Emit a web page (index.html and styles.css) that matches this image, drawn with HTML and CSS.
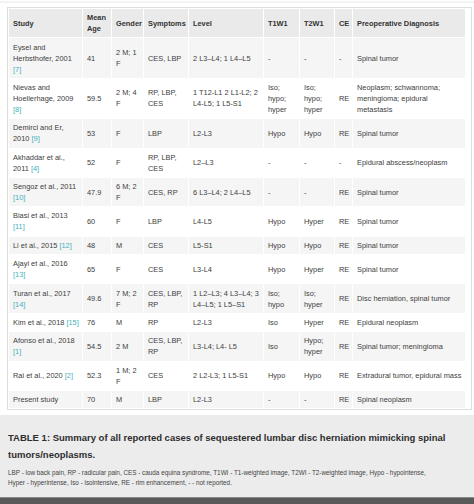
FILE: index.html
```html
<!DOCTYPE html>
<html>
<head>
<meta charset="utf-8">
<link rel="stylesheet" href="styles.css">
</head>
<body>
<div class="page">
  <div class="top-strip"></div>
  <div class="table-box">
    <table class="cases">
      <colgroup>
        <col class="c-study"><col class="c-age"><col class="c-gender"><col class="c-sym"><col class="c-level"><col class="c-t1"><col class="c-t2"><col class="c-ce"><col class="c-dx">
      </colgroup>
      <thead>
        <tr><th>Study</th><th>Mean Age</th><th>Gender</th><th>Symptoms</th><th>Level</th><th>T1W1</th><th>T2W1</th><th>CE</th><th>Preoperative Diagnosis</th></tr>
      </thead>
      <tbody>
        <tr><td>Eysel and Herbsthofer, 2001 <a class="ref">[7]</a></td><td>41</td><td>2 M; 1 F</td><td>CES, LBP</td><td>2 L3–L4; 1 L4–L5</td><td>-</td><td>-</td><td>-</td><td>Spinal tumor</td></tr>
        <tr><td>Nievas and Hoellerhage, 2009 <a class="ref">[8]</a></td><td>59.5</td><td>2 M; 4 F</td><td>RP, LBP, CES</td><td>1 T12-L1 2 L1-L2; 2 L4-L5; 1 L5-S1</td><td>Iso; hypo; hyper</td><td>Iso; hypo; hyper</td><td>RE</td><td>Neoplasm; schwannoma; meningioma; epidural metastasis</td></tr>
        <tr><td>Demirci and Er, 2010 <a class="ref">[9]</a></td><td>53</td><td>F</td><td>LBP</td><td>L2-L3</td><td>Hypo</td><td>Hypo</td><td>RE</td><td>Spinal tumor</td></tr>
        <tr><td>Akhaddar et al., 2011 <a class="ref">[4]</a></td><td>52</td><td>F</td><td>RP, LBP, CES</td><td>L2–L3</td><td>-</td><td>-</td><td>-</td><td>Epidural abscess/neoplasm</td></tr>
        <tr><td>Sengoz et al., 2011 <a class="ref">[10]</a></td><td>47.9</td><td>6 M; 2 F</td><td>CES, RP</td><td>6 L3–L4; 2 L4–L5</td><td>-</td><td>-</td><td>RE</td><td>Spinal tumor</td></tr>
        <tr><td>Biasi et al., 2013 <a class="ref">[11]</a></td><td>60</td><td>F</td><td>LBP</td><td>L4-L5</td><td>Hypo</td><td>Hyper</td><td>RE</td><td>Spinal tumor</td></tr>
        <tr><td>Li et al., 2015 <a class="ref">[12]</a></td><td>48</td><td>M</td><td>CES</td><td>L5-S1</td><td>Hypo</td><td>Hypo</td><td>RE</td><td>Spinal tumor</td></tr>
        <tr><td>Ajayi et al., 2016 <a class="ref">[13]</a></td><td>65</td><td>F</td><td>CES</td><td>L3-L4</td><td>Hypo</td><td>Hyper</td><td>RE</td><td>Spinal tumor</td></tr>
        <tr><td>Turan et al., 2017 <a class="ref">[14]</a></td><td>49.6</td><td>7 M; 2 F</td><td>CES, LBP, RP</td><td>1 L2–L3; 4 L3–L4; 3 L4–L5; 1 L5–S1</td><td>Iso; hypo</td><td>Iso; hyper</td><td>RE</td><td>Disc herniation, spinal tumor</td></tr>
        <tr><td>Kim et al., 2018 <a class="ref">[15]</a></td><td>76</td><td>M</td><td>RP</td><td>L2-L3</td><td>Iso</td><td>Hyper</td><td>RE</td><td>Epidural neoplasm</td></tr>
        <tr><td>Afonso et al., 2018 <a class="ref">[1]</a></td><td>54.5</td><td>2 M</td><td>CES, LBP, RP</td><td>L3-L4; L4- L5</td><td>Iso</td><td>Hypo; hyper</td><td>RE</td><td>Spinal tumor; meningioma</td></tr>
        <tr><td>Rai et al., 2020 <a class="ref">[2]</a></td><td>52.3</td><td>1 M; 2 F</td><td>CES</td><td>2 L2-L3; 1 L5-S1</td><td>Hypo</td><td>Hypo</td><td>RE</td><td>Extradural tumor, epidural mass</td></tr>
        <tr><td>Present study</td><td>70</td><td>M</td><td>LBP</td><td>L2-L3</td><td>-</td><td>-</td><td>RE</td><td>Spinal neoplasm</td></tr>
      </tbody>
    </table>
  </div>
  <div class="caption">
    <p class="caption-title">TABLE 1: Summary of all reported cases of sequestered lumbar disc herniation mimicking spinal tumors/neoplasms.</p>
    <p class="caption-notes">LBP - low back pain, RP - radicular pain, CES - cauda equina syndrome, T1WI - T1-weighted image, T2WI - T2-weighted image, Hypo - hypointense, Hyper - hyperintense, Iso - isointensive, RE - rim enhancement, - - not reported.</p>
  </div>
  <div class="bottom-bar"></div>
</div>
</body>
</html>
```
FILE: styles.css
```css
html, body {
  margin: 0;
  padding: 0;
  background: #ffffff;
}
.page {
  width: 474px;
  height: 504px;
  overflow: hidden;
  display: flex;
  flex-direction: column;
  font-family: "Liberation Sans", Arial, sans-serif;
  color: #3d3d3d;
}
.top-strip {
  height: 2px;
  margin-top: 1px;
  background: #f3f3f3;
}
.table-box {
  margin: 4px 2px 0 7px;
  border: 1px solid #dedede;
  padding: 0 6px 0 0;
  background: #fff;
}
.cases {
  border-collapse: collapse;
  table-layout: fixed;
  width: 457px;
  font-size: 7.4px;
  line-height: 11px;
}
.c-study { width: 74px; }
.c-age { width: 29px; }
.c-gender { width: 32px; }
.c-sym { width: 45px; }
.c-level { width: 75px; }
.c-t1 { width: 36px; }
.c-t2 { width: 35px; }
.c-ce { width: 18px; }
.c-dx { width: 113px; }
.cases th, .cases td {
  padding: 3.2px 3px 3.2px 4px;
  border: 1px solid #ffffff;
  text-align: left;
  vertical-align: middle;
}
.cases th {
  background: #eaeaea;
  font-weight: bold;
  color: #333;
}
.cases tbody tr:nth-child(odd) td {
  background: #f5f5f5;
}
.cases tbody tr:nth-child(even) td {
  background: #ffffff;
}
.ref {
  color: #45b0bd;
}
.caption {
  margin-top: 5px;
  flex: 1;
  background: #ececec;
  padding: 14px 8px 0 8px;
}
.caption-title {
  margin: 0;
  font-size: 9.5px;
  line-height: 17px;
  font-weight: bold;
  color: #2e2e2e;
}
.caption-notes {
  margin: 5px 22px 0 0;
  font-size: 6.35px;
  line-height: 10px;
  color: #444;
}
.bottom-bar {
  height: 6px;
  background: #5a5a5a;
  border-top: 1px solid #8a8a8a;
}
```
